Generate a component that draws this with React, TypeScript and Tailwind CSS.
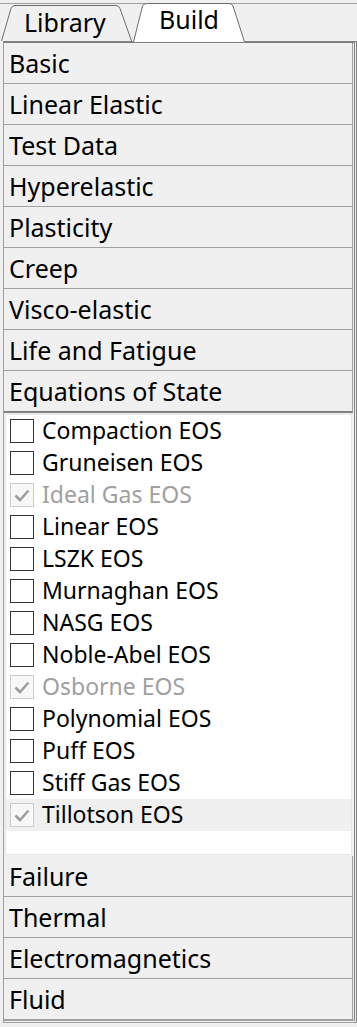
import React from "react";

const topHeaders = [
  "Basic",
  "Linear Elastic",
  "Test Data",
  "Hyperelastic",
  "Plasticity",
  "Creep",
  "Visco-elastic",
  "Life and Fatigue",
];
const bottomHeaders = ["Failure", "Thermal", "Electromagnetics", "Fluid"];

const items: { label: string; checked: boolean; hl?: boolean }[] = [
  { label: "Compaction EOS", checked: false },
  { label: "Gruneisen EOS", checked: false },
  { label: "Ideal Gas EOS", checked: true },
  { label: "Linear EOS", checked: false },
  { label: "LSZK EOS", checked: false },
  { label: "Murnaghan EOS", checked: false },
  { label: "NASG EOS", checked: false },
  { label: "Noble-Abel EOS", checked: false },
  { label: "Osborne EOS", checked: true },
  { label: "Polynomial EOS", checked: false },
  { label: "Puff EOS", checked: false },
  { label: "Stiff Gas EOS", checked: false },
  { label: "Tillotson EOS", checked: true, hl: true },
];

function Header({ label, active }: { label: string; active?: boolean }) {
  return (
    <div
      className={
        "flex items-center pl-[5px] bg-[#f0f0f0] border-r border-r-[#a0a0a0] " +
        (active
          ? "h-[42px] border-b-2 border-b-[#808080]"
          : "h-[41px] border-b border-b-[#a0a0a0]")
      }
    >
      <span className="text-[25px] leading-none text-black">{label}</span>
    </div>
  );
}

function Item({ label, checked, hl }: { label: string; checked: boolean; hl?: boolean }) {
  return (
    <div className={"flex items-center h-[32px] " + (hl ? "bg-[#f0f0f0]" : "")}>
      <div
        className={
          "ml-[4px] w-[24px] h-[24px] flex items-center justify-center border " +
          (checked ? "border-[#cccccc] bg-[#f7f7f7]" : "border-[#333333] bg-white")
        }
      >
        {checked && (
          <svg width="22" height="22" viewBox="0 0 22 22">
            <path d="M4.5 11.5 L9 16 L17.5 6.5" fill="none" stroke="#a0a0a0" strokeWidth="2.6" />
          </svg>
        )}
      </div>
      <span
        className={
          "ml-[8px] text-[23px] leading-none pb-[1px] " +
          (checked && !hl ? "text-[#a0a0a0]" : "text-black")
        }
      >
        {label}
      </span>
    </div>
  );
}

export default function App() {
  return (
    <div
      className="w-[357px] h-[1027px] bg-[#f0f0f0] overflow-hidden"
      style={{ fontFamily: '"Noto Sans", "Open Sans", sans-serif' }}
    >
      {/* tab bar */}
      <div className="relative h-[41px] pt-[3px]">
        <div className="h-px bg-[#a0a0a0]" />
        <div className="absolute left-0 top-0 w-[132px] h-[41px]">
          <svg className="absolute inset-0" width="133" height="41" viewBox="0 0 133 41">
            <path
              d="M1.5 41 L11 8.5 Q12 5.5 15 5.5 L116 5.5 Q119 5.5 120 8.5 L131.5 41"
              fill="#f0f0f0"
              stroke="#6e6e6e"
              strokeWidth="1"
            />
          </svg>
          <span className="absolute left-[24px] top-[10px] text-[25px] leading-none text-black">
            Library
          </span>
        </div>
        <div className="absolute left-[132px] top-0 w-[114px] h-[42px]">
          <svg className="absolute inset-0" width="114" height="42" viewBox="0 0 114 42">
            <path
              d="M1.5 42 L10.5 6 Q11.5 3.5 14.5 3.5 L97 3.5 Q100 3.5 101 6 L112.5 42"
              fill="#ffffff"
              stroke="#6e6e6e"
              strokeWidth="1"
            />
          </svg>
          <span className="absolute left-[27px] top-[7px] text-[25px] leading-none text-black">
            Build
          </span>
        </div>
      </div>

      {/* panel */}
      <div className="ml-[3px] w-[354px] border-l border-l-[#a0a0a0] border-t-2 border-t-[#808080] border-r-[3px] border-r-[#808080] border-b-[3px] border-b-[#a0a0a0] border-double">
        <div className="pr-px">
          {topHeaders.map((h) => (
            <Header key={h} label={h} />
          ))}
          <Header label="Equations of State" active />
          <div className="h-[443px] p-px">
            <div className="h-full bg-white border border-[#e6e6e6]">
              {items.map((it) => (
                <Item key={it.label} {...it} />
              ))}
            </div>
          </div>
          {bottomHeaders.map((h) => (
            <Header key={h} label={h} />
          ))}
        </div>
      </div>
    </div>
  );
}
